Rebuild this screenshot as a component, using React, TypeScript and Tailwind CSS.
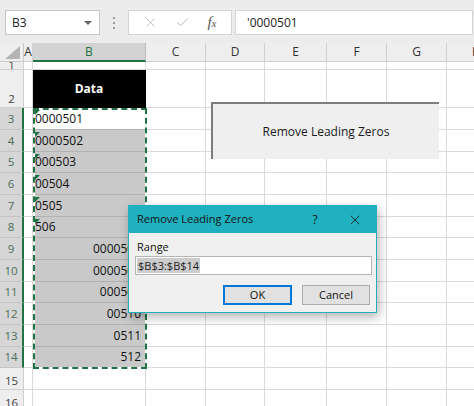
import React from 'react';
import { X, Check } from 'lucide-react';

const cols = [
  { label: 'A', w: 'w-[9px]' },
  { label: 'B', w: 'w-[113px]' },
  { label: 'C', w: 'w-[60px]' },
  { label: 'D', w: 'w-[59px]' },
  { label: 'E', w: 'w-[62px]' },
  { label: 'F', w: 'w-[60px]' },
  { label: 'G', w: 'w-[60px]' },
  { label: 'H', w: 'w-[60px]' },
];

interface RowDef {
  n: number;
  h: string;
  v?: string;
  asText?: boolean;
}

const rows: RowDef[] = [
  { n: 1, h: 'h-[8px]' },
  { n: 2, h: 'h-[38px]' },
  { n: 3, h: 'h-[22px]', v: '0000501', asText: true },
  { n: 4, h: 'h-[22px]', v: '0000502', asText: true },
  { n: 5, h: 'h-[21px]', v: '000503', asText: true },
  { n: 6, h: 'h-[22px]', v: '00504', asText: true },
  { n: 7, h: 'h-[22px]', v: '0505', asText: true },
  { n: 8, h: 'h-[21px]', v: '506', asText: true },
  { n: 9, h: 'h-[22px]', v: '0000507' },
  { n: 10, h: 'h-[22px]', v: '0000508' },
  { n: 11, h: 'h-[21px]', v: '000509' },
  { n: 12, h: 'h-[22px]', v: '00510' },
  { n: 13, h: 'h-[22px]', v: '0511' },
  { n: 14, h: 'h-[21px]', v: '512' },
  { n: 15, h: 'h-[22px]' },
  { n: 16, h: 'h-[22px]' },
];

const FormulaBar = () => (
  <div className="h-[43px] bg-[#ececec] flex items-start pt-[10px] pl-[5px] gap-0">
    {/* name box */}
    <div className="w-[95px] h-[25px] bg-white border border-[#c6c6c6] flex items-center justify-between pl-[6px] pr-[7px] text-[12px] text-[#222]">
      <span>B3</span>
      <span className="w-0 h-0 border-l-[4px] border-r-[4px] border-t-[4px] border-l-transparent border-r-transparent border-t-[#666]" />
    </div>
    {/* separator dots */}
    <div className="w-[28px] h-[25px] flex flex-col items-center justify-center gap-[3px]">
      <span className="w-[2px] h-[2px] bg-[#9a9a9a]" />
      <span className="w-[2px] h-[2px] bg-[#9a9a9a]" />
      <span className="w-[2px] h-[2px] bg-[#9a9a9a]" />
    </div>
    {/* cancel / enter / fx */}
    <div className="w-[104px] h-[25px] bg-white border border-[#d4d4d4] flex items-center justify-around px-[6px]">
      <X size={15} strokeWidth={1.3} className="text-[#b3b3b3]" />
      <Check size={15} strokeWidth={1.5} className="text-[#b3b3b3]" />
      <span className="font-['Liberation_Serif',serif] italic text-[15px] text-[#555] leading-none">
        f<span className="text-[11px]">x</span>
      </span>
    </div>
    {/* formula input */}
    <div className="ml-[3px] w-[238px] h-[25px] bg-white border border-[#d4d4d4] flex items-center pl-[11px] text-[12px] text-[#222]">
      '0000501
    </div>
  </div>
);

const ColumnHeaders = () => (
  <div className="flex h-[19px]">
    <div className="w-[24px] shrink-0 bg-[#eeeeee] border-r border-b border-[#c9c9c9] flex items-end justify-end pr-[3px] pb-[2px]">
      <span className="w-0 h-0 border-l-[15px] border-b-[13px] border-l-transparent border-b-[#b4b4b4]" />
    </div>
    {cols.map((c) =>
      c.label === 'B' ? (
        <div
          key={c.label}
          className={`${c.w} shrink-0 bg-[#d3d3d3] border-r border-[#bdbdbd] border-b-2 border-b-[#217346] flex items-center justify-center text-[12px] text-[#217346]`}
        >
          {c.label}
        </div>
      ) : (
        <div
          key={c.label}
          className={`${c.w} shrink-0 bg-[#eeeeee] border-r border-b border-[#d0d0d0] flex items-center justify-center text-[12px] text-[#333] overflow-hidden`}
        >
          {c.label}
        </div>
      )
    )}
  </div>
);

const Row = ({ r }: { r: RowDef }) => {
  const inRange = r.n >= 3 && r.n <= 14;
  return (
    <div className={`flex ${r.h} overflow-hidden`}>
      {/* row header */}
      <div
        className={`w-[24px] shrink-0 flex justify-center text-[11.5px] overflow-hidden border-b ${
          inRange
            ? 'bg-[#d6d6d6] text-[#4a6f59] border-r-2 border-r-[#217346] border-b-[#c4c4c4] items-center'
            : 'bg-[#eeeeee] text-[#444] border-r border-[#cfcfcf] items-end'
        } ${r.n === 1 ? 'items-start leading-[6px]' : ''}`}
      >
        {r.n}
      </div>
      {cols.map((c) => {
        if (c.label === 'B') {
          if (r.n === 2) {
            return (
              <div
                key={c.label}
                className={`${c.w} shrink-0 bg-black border-r border-b border-black flex items-center justify-center text-white font-bold text-[12px]`}
              >
                Data
              </div>
            );
          }
          if (inRange) {
            return (
              <div
                key={c.label}
                className={`${c.w} shrink-0 relative border-r border-b border-[#b3b3b3] flex items-center text-[12px] text-[#111] ${
                  r.n === 3 ? 'bg-white' : 'bg-[#c9c9c9]'
                } ${r.asText ? 'justify-start pl-[2px]' : 'justify-end pr-[4px]'}`}
              >
                {r.asText && (
                  <span className="absolute left-[2px] top-[2px] w-0 h-0 border-t-[5px] border-r-[5px] border-t-[#217346] border-r-transparent" />
                )}
                {r.v}
              </div>
            );
          }
        }
        return (
          <div key={c.label} className={`${c.w} shrink-0 bg-white border-r border-b border-[#dadada]`} />
        );
      })}
    </div>
  );
};

const SheetButton = () => (
  <div className="absolute left-[211px] top-[102px] w-[228px] h-[57px] bg-[#efefef] border-t-2 border-l-2 border-[#7d7d7d] flex items-center justify-center text-[12px] text-[#1a1a1a]">
    Remove Leading Zeros
  </div>
);

const Dialog = () => (
  <div className="absolute left-[128px] top-[205px] w-[249px] h-[108px] bg-[#f0f0f0] border border-[#1fb1bf] shadow-[2px_4px_10px_rgba(0,0,0,0.3)]">
    <div className="h-[27px] bg-[#1fb1bf] flex items-center pl-[8px] text-[11px] text-[#111]">
      <span className="flex-1">Remove Leading Zeros</span>
      <span className="w-[20px] text-center text-[12px] mr-[22px]">?</span>
      <X size={16} strokeWidth={1.3} className="text-[#222] mr-[13px]" />
    </div>
    <div className="pl-[6px] pt-[7px]">
      <div className="text-[11px] leading-[14px] pl-[2px] text-[#111]">Range</div>
      <div className="mt-[2px] w-[237px] h-[19px] bg-white border border-[#b5b5b5] flex items-center pl-[1px]">
        <span className="bg-[#cccccc] px-[1px] text-[11px] leading-[15px] text-[#222]">$B$3:$B$14</span>
      </div>
      <div className="mt-[10px] flex justify-end gap-[10px] pr-[6px]">
        <button className="w-[69px] h-[20px] bg-[#e1e1e1] border-2 border-[#0078d7] text-[11px] text-[#111] flex items-center justify-center">
          OK
        </button>
        <button className="w-[68px] h-[20px] bg-[#e1e1e1] border border-[#adadad] text-[11px] text-[#111] flex items-center justify-center">
          Cancel
        </button>
      </div>
    </div>
  </div>
);

export default function App() {
  return (
    <div className="relative w-[474px] h-[406px] overflow-hidden bg-white font-['Open_Sans',sans-serif]">
      <FormulaBar />
      <ColumnHeaders />
      {rows.map((r) => (
        <Row key={r.n} r={r} />
      ))}
      {/* copy marquee around B3:B14 */}
      <div className="absolute left-[33px] top-[108px] w-[114px] h-[261px] border-2 border-white pointer-events-none" />
      <div className="absolute left-[33px] top-[108px] w-[114px] h-[261px] border-2 border-dashed border-[#217346] pointer-events-none" />
      <SheetButton />
      <Dialog />
    </div>
  );
}
